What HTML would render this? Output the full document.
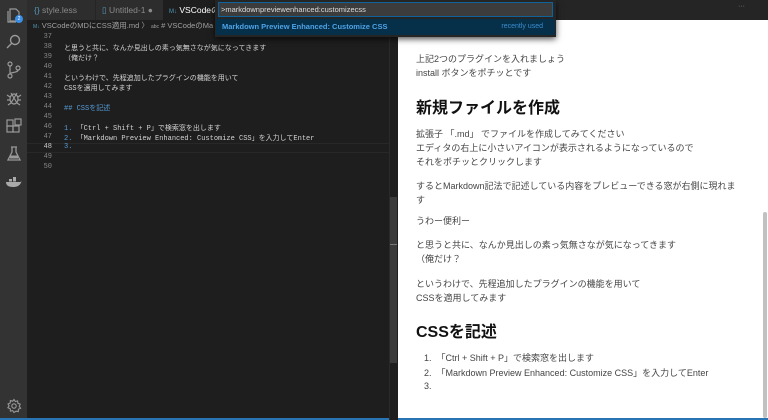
<!DOCTYPE html>
<html><head><meta charset="utf-8"><style>
*{margin:0;padding:0;box-sizing:border-box}
body{width:768px;height:420px;overflow:hidden;background:#1e1e1e;position:relative;font-family:"Liberation Sans","Noto Sans CJK JP",sans-serif}
.a{position:absolute;white-space:nowrap}
#act{left:0;top:0;width:27px;height:420px;background:#333}
#tabs{left:27px;top:0;width:741px;height:20px;background:#252526}
.tab{position:absolute;top:0;height:20px;font-size:8.5px;line-height:20px;color:#8a8a8a;background:#2d2d2d}
#bc{left:27px;top:20px;width:371px;height:12px;background:#1e1e1e;font-size:7.5px;color:#a0a0a0;line-height:12px}
.ln{position:absolute;left:30px;width:22px;text-align:right;font-size:7px;color:#858585;font-family:"Liberation Mono","Noto Sans CJK JP",monospace}
.cd{position:absolute;left:64px;font-size:7px;color:#d4d4d4;font-family:"Liberation Mono","Noto Sans CJK JP",monospace;white-space:nowrap}
.pv{position:absolute;left:416px;font-size:9px;color:#444;white-space:nowrap}
.h{position:absolute;left:416px;font-size:16px;font-weight:bold;color:#111;white-space:nowrap}
svg{position:absolute}
</style></head><body>
<div class="a" id="act"></div>
<svg style="left:6px;top:6px" width="16" height="17" viewBox="0 0 16 17" fill="none" stroke="#999" stroke-width="1.2"><path d="M4 3h6l3 3v9H4z"/><path d="M2 5v11h8"/></svg>
<div class="a" style="left:15px;top:15px;width:8px;height:8px;border-radius:4px;background:#3a8ee6;font-size:5px;color:#fff;text-align:center;line-height:8px">2</div>
<svg style="left:6px;top:34px" width="16" height="16" fill="none" stroke="#999" stroke-width="1.4"><circle cx="9" cy="6" r="4.5"/><path d="M6 9l-5 5"/></svg>
<svg style="left:7px;top:61px" width="14" height="18" fill="none" stroke="#999" stroke-width="1.2"><circle cx="3" cy="3" r="2"/><circle cx="3" cy="15" r="2"/><circle cx="11" cy="7" r="2"/><path d="M3 5v8M11 9c0 3-8 2-8 4"/></svg>
<svg style="left:6px;top:89px" width="16" height="17" fill="none" stroke="#999" stroke-width="1.2"><ellipse cx="8" cy="10" rx="4" ry="5"/><path d="M1 6l3 2M15 6l-3 2M1 11h3M15 11h-3M2 16l3-2M14 16l-3-2M5 4l6 10M11 4l-6 10"/></svg>
<svg style="left:6px;top:118px" width="16" height="16" fill="none" stroke="#999" stroke-width="1.2"><rect x="1" y="8" width="6" height="6"/><rect x="7" y="8" width="6" height="6"/><rect x="1" y="2" width="6" height="6"/><rect x="9" y="1" width="6" height="6"/></svg>
<svg style="left:7px;top:146px" width="14" height="16" fill="none" stroke="#999" stroke-width="1.3"><path d="M4 1h6M5 1v5L1 14h12L9 6V1"/><path d="M3 11h8" stroke-width="3"/></svg>
<svg style="left:5px;top:177px" width="17" height="12"><path d="M1 5h14c1 0 2-1 2-2-1 3-2 7-9 7-5 0-7-2-7-5z" fill="#aaa"/><rect x="4" y="2" width="3" height="2.5" fill="#aaa"/><rect x="8" y="2" width="3" height="2.5" fill="#aaa"/><rect x="8" y="0" width="3" height="2" fill="#aaa"/></svg>
<svg style="left:6px;top:398px" width="16" height="16" fill="none" stroke="#999" stroke-width="1.1"><circle cx="8" cy="8" r="2.2"/><path d="M8 1.5l1.3 2 2.3-.6.3 2.4 2.3.9-1 2.1 1.4 1.9-2.2 1-.1 2.4-2.3-.4L8 14.5l-1.3-1.9-2.3.5-.2-2.4-2.3-1 1.2-2L2 6l2.2-1 .2-2.4 2.3.6z"/></svg>
<div class="a" style="left:0;top:418px;width:768px;height:2px;background:#2b74b3"></div>

<div class="a" id="tabs"></div>
<div class="tab" style="left:27px;width:68px;padding-left:7px"><span style="color:#519aba">{}</span> style.less</div>
<div class="tab" style="left:95px;width:68px;padding-left:6px;border-left:1px solid #252526"><span style="color:#519aba">▯</span> Untitled-1 ●</div>
<div class="tab" style="left:163px;width:60px;padding-left:6px;background:#1e1e1e;color:#fff"><span style="color:#519aba;font-size:6px">M↓</span> VSCodeの</div>
<div class="a" style="left:738px;top:3px;font-size:7px;color:#888">···</div>
<div class="a" id="bc"><span style="padding-left:6px"><span style="color:#519aba;font-size:5px">M↓</span> VSCodeのMDにCSS適用.md 〉 <span style="font-size:5px">abc</span> # VSCodeのMa</span></div>

<div class="a" style="left:389px;top:32px;width:9px;height:388px;background:#1e1e1e;border-left:1px solid #2a2a2a"></div>
<div class="a" style="left:390px;top:197px;width:7px;height:166px;background:#3a3a3a"></div>
<div class="a" style="left:390px;top:244px;width:7px;height:1px;background:#777"></div>

<div class="ln" style="top:33px">37</div>
<div class="ln" style="top:43px">38</div><div class="cd" style="top:43px">と思うと共に、なんか見出しの素っ気無さなが気になってきます</div>
<div class="ln" style="top:53px">39</div><div class="cd" style="top:53px">（俺だけ？</div>
<div class="ln" style="top:63px">40</div>
<div class="ln" style="top:73px">41</div><div class="cd" style="top:73px">というわけで、先程追加したプラグインの機能を用いて</div>
<div class="ln" style="top:83px">42</div><div class="cd" style="top:83px">CSSを適用してみます</div>
<div class="ln" style="top:93px">43</div>
<div class="ln" style="top:103px">44</div><div class="cd" style="top:103px;color:#569cd6">## CSSを記述</div>
<div class="ln" style="top:113px">45</div>
<div class="ln" style="top:123px">46</div><div class="cd" style="top:123px"><span style="color:#569cd6">1.</span> 「Ctrl + Shift + P」で検索窓を出します</div>
<div class="ln" style="top:133px">47</div><div class="cd" style="top:133px"><span style="color:#569cd6">2.</span> 「Markdown Preview Enhanced: Customize CSS」を入力してEnter</div>
<div class="a" style="left:27px;top:143px;width:362px;height:10px;border-top:1px solid #282828;border-bottom:1px solid #282828"></div>
<div class="ln" style="top:143px;color:#c6c6c6">48</div><div class="cd" style="top:143px;color:#569cd6">3.</div>
<div class="ln" style="top:153px">49</div>
<div class="ln" style="top:163px">50</div>

<div class="a" style="left:398px;top:20px;width:370px;height:398px;background:#fff"></div>
<div class="a" style="left:763px;top:212px;width:4px;height:206px;background:#c1c1c1;border-radius:2px"></div>
<div class="pv" style="top:52px">上記2つのプラグインを入れましょう</div>
<div class="pv" style="top:66px">install ボタンをポチッとです</div>
<div class="h" style="top:94px">新規ファイルを作成</div>
<div class="pv" style="top:127px">拡張子 「.md」 でファイルを作成してみてください</div>
<div class="pv" style="top:141px">エディタの右上に小さいアイコンが表示されるようになっているので</div>
<div class="pv" style="top:155px">それをポチッとクリックします</div>
<div class="pv" style="top:179px">するとMarkdown記法で記述している内容をプレビューできる窓が右側に現れま</div>
<div class="pv" style="top:193px">す</div>
<div class="pv" style="top:214px">うわー便利ー</div>
<div class="pv" style="top:238px">と思うと共に、なんか見出しの素っ気無さなが気になってきます</div>
<div class="pv" style="top:252px">（俺だけ？</div>
<div class="pv" style="top:277px">というわけで、先程追加したプラグインの機能を用いて</div>
<div class="pv" style="top:291px">CSSを適用してみます</div>
<div class="h" style="top:318px">CSSを記述</div>
<div class="pv" style="top:351px;left:424px">1.&nbsp; 「Ctrl + Shift + P」で検索窓を出します</div>
<div class="pv" style="top:366px;left:424px">2.&nbsp; 「Markdown Preview Enhanced: Customize CSS」を入力してEnter</div>
<div class="pv" style="top:381px;left:424px">3.</div>

<div class="a" style="left:215px;top:0;width:341px;height:37px;background:#252526;box-shadow:0 2px 6px rgba(0,0,0,.7)"></div>
<div class="a" style="left:218px;top:2px;width:335px;height:15px;background:#3c3c3c;border:1px solid #0e639c;font-size:7.5px;color:#ddd;line-height:13px;padding-left:2px">&gt;markdownpreviewenhanced:customizecss</div>
<div class="a" style="left:216px;top:19px;width:339px;height:16px;background:#062f4a;font-size:7.5px;line-height:16px;color:#4ea3e6;padding-left:6px;font-weight:bold">Markdown Preview Enhanced: Customize CSS<span style="position:absolute;right:12px;font-weight:normal;font-size:7px;color:#3a8ed0">recently used</span></div>
</body></html>
